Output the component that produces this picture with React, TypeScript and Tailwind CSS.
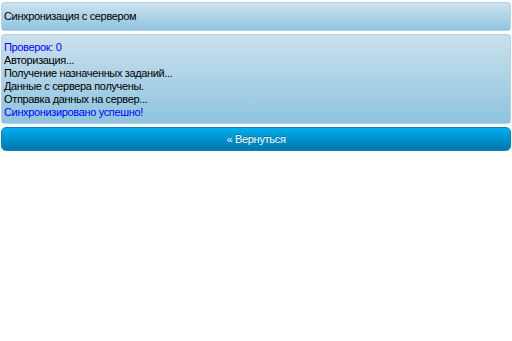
export default function App() {
  const lines = [
    { text: 'Проверок: 0', blue: true },
    { text: 'Авторизация...', blue: false },
    { text: 'Получение назначенных заданий...', blue: false },
    { text: 'Данные с сервера получены.', blue: false },
    { text: 'Отправка данных на сервер...', blue: false },
    { text: 'Синхронизировано успешно!', blue: true },
  ];

  return (
    <div className="w-[512px] h-[341px] bg-white px-[1px] pt-[2px] font-['Liberation_Sans',Arial,sans-serif] text-[11px] tracking-[-0.35px]">
      <div className="h-[29px] flex items-center px-[2px] rounded-[3px] border border-[#b5d3e4] bg-gradient-to-b from-[#cde2ee] to-[#8fc4e1] text-black">
        Синхронизация с сервером
      </div>
      <div className="mt-[3px] h-[90px] px-[2px] pt-[6px] rounded-[3px] border border-[#b5d3e4] bg-gradient-to-b from-[#cbe0ec] to-[#8ec4e0] leading-[12.9px]">
        {lines.map((l, i) => (
          <div key={i} className={l.blue ? 'text-[#0000ff]' : 'text-black'}>
            {l.text}
          </div>
        ))}
      </div>
      <button className="mt-[3px] w-full h-[24px] rounded-[5px] border border-[#0a84b8] bg-gradient-to-b from-[#00aeed] to-[#0077ad] text-white tracking-[-0.3px] [text-shadow:0_-1px_0_rgba(0,0,0,0.3)]">
        « Вернуться
      </button>
    </div>
  );
}
